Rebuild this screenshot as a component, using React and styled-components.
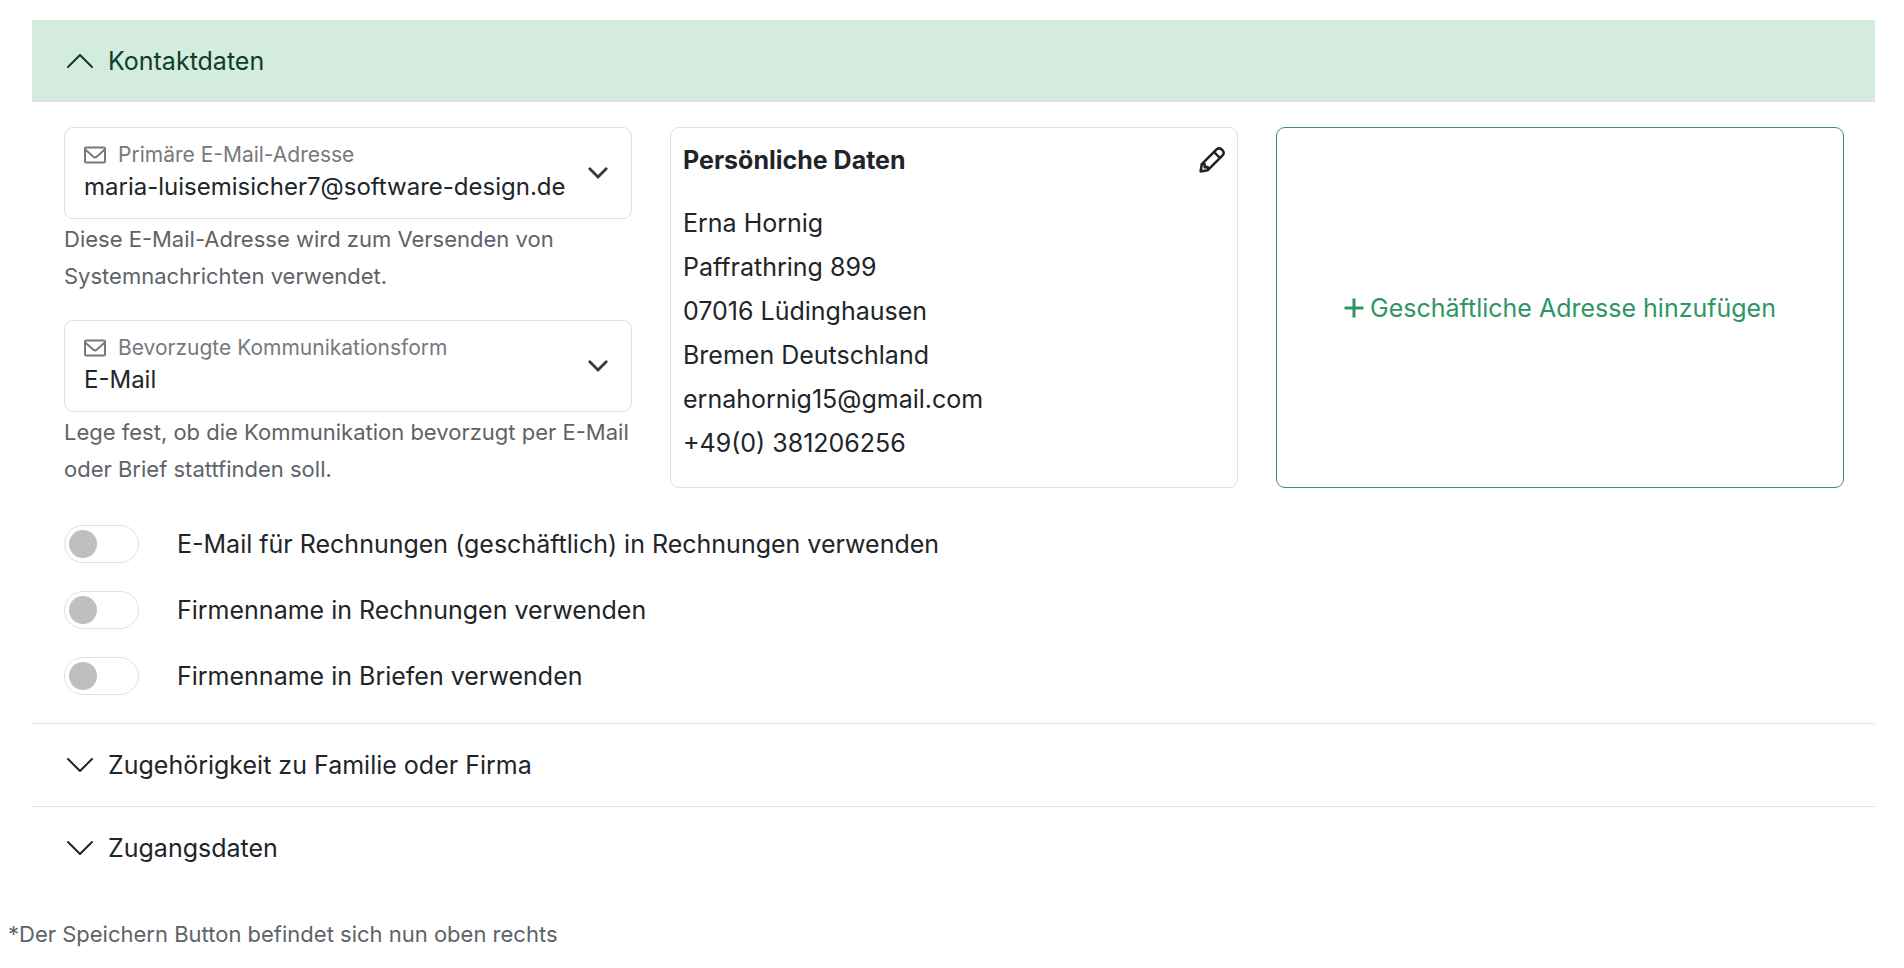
import React, { useState } from "react";
import styled, { createGlobalStyle } from "styled-components";

const GlobalStyle = createGlobalStyle`
  * {
    box-sizing: border-box;
  }
  body {
    margin: 0;
    background: #fff;
    color: #212529;
    font-family: Inter, "Liberation Sans", sans-serif;
    font-size: 25px;
    line-height: 44px;
  }
  button, select {
    font: inherit;
    color: inherit;
  }
`;

const Page = styled.main`
  padding: 20px 29px 0 32px;
`;

const Section = styled.section`
  border-top: ${(props) => (props.$first ? "0" : "1px solid #dee2e2")};
`;

const SectionTitle = styled.h2`
  margin: 0;
  font-size: 25px;
  font-weight: 400;
`;

const SectionToggle = styled.button`
  display: flex;
  align-items: center;
  gap: 12px;
  width: 100%;
  height: 82px;
  padding: 0 32px;
  border: 0;
  text-align: left;
  cursor: pointer;
  background: ${(props) => (props.$open ? "#d4ecdf" : "#fff")};
  color: ${(props) => (props.$open ? "#0f3d27" : "#212529")};
  box-shadow: ${(props) => (props.$open ? "inset 0 -2px 0 #d9e4e3" : "none")};
  svg {
    flex: none;
    transform: ${(props) => (props.$open ? "rotate(180deg)" : "none")};
  }
`;

const SectionBody = styled.div`
  padding: 25px 31px 28px 32px;
`;

const Columns = styled.div`
  display: grid;
  grid-template-columns: repeat(3, minmax(0, 1fr));
  gap: 38px;
`;

const Fields = styled.div`
  display: flex;
  flex-direction: column;
  gap: 25px;
`;

const SelectBox = styled.div`
  position: relative;
  height: 92px;
  color: #212529;
`;

const SelectLabel = styled.label`
  position: absolute;
  top: 10px;
  left: 20px;
  display: flex;
  align-items: center;
  gap: 12px;
  font-size: 21px;
  line-height: 36px;
  color: #77797b;
  pointer-events: none;
`;

const Select = styled.select`
  width: 100%;
  height: 100%;
  padding: 36px 48px 8px 19px;
  border: 1px solid #dee0e2;
  border-radius: 9px;
  background: #fff;
  font-size: 24px;
  appearance: none;
`;

const SelectArrow = styled.svg`
  position: absolute;
  top: 36px;
  right: 24px;
  pointer-events: none;
`;

const Hint = styled.p`
  margin: 2px 0 0;
  font-size: 22px;
  line-height: 37px;
  color: #606366;
`;

const Card = styled.article`
  min-height: 360px;
  padding: 10px 12px;
  border: 1px solid #dee0e2;
  border-radius: 9px;
`;

const CardHead = styled.header`
  display: flex;
  align-items: center;
  justify-content: space-between;
  margin-bottom: 19px;
  h3 {
    margin: 0;
    font-size: 25px;
    font-weight: 700;
  }
`;

const IconButton = styled.button`
  display: flex;
  padding: 0;
  border: 0;
  background: none;
  cursor: pointer;
`;

const Address = styled.address`
  font-style: normal;
`;

const AddButton = styled.button`
  display: flex;
  align-items: center;
  justify-content: center;
  gap: 6px;
  border: 1px solid #2f9566;
  border-radius: 9px;
  background: #fff;
  color: #2f9566;
  cursor: pointer;
`;

const Switches = styled.div`
  display: flex;
  flex-direction: column;
  gap: 28px;
  margin-top: 37px;
`;

const SwitchRow = styled.label`
  display: flex;
  align-items: center;
  gap: 38px;
  height: 38px;
`;

const Switch = styled.input`
  display: flex;
  align-items: center;
  flex: none;
  width: 75px;
  height: 38px;
  margin: 0;
  padding: 0 4px;
  border: 1px solid #dfe1e3;
  border-radius: 19px;
  background: #fff;
  appearance: none;
  cursor: pointer;
  &::before {
    content: "";
    width: 28px;
    height: 28px;
    border-radius: 50%;
    background: #bfbfbf;
  }
  &:checked {
    justify-content: flex-end;
  }
  &:checked::before {
    background: #2f9566;
  }
`;

const Note = styled.p`
  margin: 27px 8px;
  font-size: 22px;
  line-height: 37px;
  color: #606366;
`;

const ChevronIcon = () => (
  <svg width="32" height="32" viewBox="0 0 16 16" fill="currentColor" aria-hidden="true">
    <path
      fillRule="evenodd"
      d="M1.646 4.646a.5.5 0 0 1 .708 0L8 10.293l5.646-5.647a.5.5 0 0 1 .708.708l-6 6a.5.5 0 0 1-.708 0l-6-6a.5.5 0 0 1 0-.708z"
    />
  </svg>
);

const EnvelopeIcon = () => (
  <svg width="22" height="18" viewBox="0 0 22 18" fill="none" stroke="currentColor" strokeWidth="2" strokeLinejoin="round" aria-hidden="true">
    <rect x="1" y="1.5" width="20" height="15" rx="1" />
    <path d="M1.5 3.8 9.4 10.7a2.4 2.4 0 0 0 3.2 0L20.5 3.8" />
  </svg>
);

const PencilIcon = () => (
  <svg width="26" height="26" viewBox="0 0 26 26" fill="none" stroke="currentColor" strokeWidth="2.6" strokeLinejoin="round" strokeLinecap="round" aria-hidden="true">
    <path d="M1.6 24.4 2.8 17.2 17.6 2.4a3.5 3.5 0 0 1 5 0l1 1a3.5 3.5 0 0 1 0 5L8.8 23.2z" />
    <path d="M15.2 5.2 20.8 10.8M3.2 17l2.6.4v2.8l2.8-.2.4 2.8" />
  </svg>
);

const PlusIcon = () => (
  <svg width="20" height="20" viewBox="0 0 20 20" fill="none" stroke="currentColor" strokeWidth="3" aria-hidden="true">
    <path d="M10 .5v19M.5 10h19" />
  </svg>
);

const address = [
  "Erna Hornig",
  "Paffrathring 899",
  "07016 Lüdinghausen",
  "Bremen Deutschland",
  "ernahornig15@gmail.com",
  "+49(0) 381206256",
];

const switches = [
  "E-Mail für Rechnungen (geschäftlich) in Rechnungen verwenden",
  "Firmenname in Rechnungen verwenden",
  "Firmenname in Briefen verwenden",
];

function SelectField({ id, label, options, hint }) {
  return (
    <div>
      <SelectBox>
        <Select id={id} aria-describedby={`${id}-hint`}>
          {options.map((option) => (
            <option key={option}>{option}</option>
          ))}
        </Select>
        <SelectLabel htmlFor={id}>
          <EnvelopeIcon />
          {label}
        </SelectLabel>
        <SelectArrow width="20" height="20" viewBox="0 0 20 20" fill="none" stroke="#343a40" strokeWidth="2.8" strokeLinecap="round" aria-hidden="true">
          <path d="m1.8 5.8 8.2 8.2 8.2-8.2" />
        </SelectArrow>
      </SelectBox>
      <Hint id={`${id}-hint`}>{hint}</Hint>
    </div>
  );
}

function AccordionSection({ title, first, defaultOpen, children }) {
  const [open, setOpen] = useState(Boolean(defaultOpen));
  return (
    <Section $first={first}>
      <SectionTitle>
        <SectionToggle type="button" $open={open} aria-expanded={open} onClick={() => setOpen(!open)}>
          <ChevronIcon />
          {title}
        </SectionToggle>
      </SectionTitle>
      {open && children && <SectionBody>{children}</SectionBody>}
    </Section>
  );
}

function App() {
  return (
    <>
      <GlobalStyle />
      <Page>
        <AccordionSection title="Kontaktdaten" first defaultOpen>
          <Columns>
            <Fields>
              <SelectField
                id="primary-mail"
                label="Primäre E-Mail-Adresse"
                options={["maria-luisemisicher7@software-design.de"]}
                hint="Diese E-Mail-Adresse wird zum Versenden von Systemnachrichten verwendet."
              />
              <SelectField
                id="communication"
                label="Bevorzugte Kommunikationsform"
                options={["E-Mail", "Brief"]}
                hint="Lege fest, ob die Kommunikation bevorzugt per E-Mail oder Brief stattfinden soll."
              />
            </Fields>
            <Card>
              <CardHead>
                <h3>Persönliche Daten</h3>
                <IconButton type="button" aria-label="Bearbeiten">
                  <PencilIcon />
                </IconButton>
              </CardHead>
              <Address>
                {address.map((line) => (
                  <div key={line}>{line}</div>
                ))}
              </Address>
            </Card>
            <AddButton type="button">
              <PlusIcon />
              Geschäftliche Adresse hinzufügen
            </AddButton>
          </Columns>
          <Switches>
            {switches.map((text) => (
              <SwitchRow key={text}>
                <Switch type="checkbox" role="switch" />
                {text}
              </SwitchRow>
            ))}
          </Switches>
        </AccordionSection>
        <AccordionSection title="Zugehörigkeit zu Familie oder Firma" />
        <AccordionSection title="Zugangsdaten" />
      </Page>
      <Note>*Der Speichern Button befindet sich nun oben rechts</Note>
    </>
  );
}

export default App;
